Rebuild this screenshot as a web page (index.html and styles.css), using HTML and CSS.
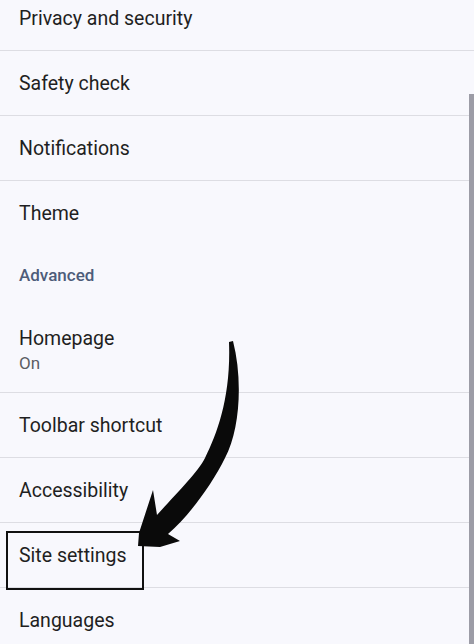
FILE: index.html
```html
<!DOCTYPE html>
<html lang="en">
<head>
<meta charset="utf-8">
<title>Settings</title>
<link rel="stylesheet" href="styles.css">
</head>
<body>
<div class="screen">
  <ul class="list">
    <li class="row">Privacy and security</li>
    <li class="row">Safety check</li>
    <li class="row">Notifications</li>
    <li class="row no-divider">Theme</li>
    <li class="category">Advanced</li>
    <li class="row two-line">
      <span class="title">Homepage</span>
      <span class="summary">On</span>
    </li>
    <li class="row">Toolbar shortcut</li>
    <li class="row">Accessibility</li>
    <li class="row">Site settings</li>
    <li class="row">Languages</li>
  </ul>
  <div class="scrollbar"></div>
  <div class="highlight"></div>
  <svg class="arrow" width="474" height="644" viewBox="0 0 474 644" aria-hidden="true">
    <path d="M229 342 L233 341 C243 380 240 430 225 458 C212 484 190 515 168 534 L180 541 L160 547 L138 546 L139 533 L153 490 L157 515 C175 495 198 472 205 458 C218 432 231 395 229 342 Z" fill="#0a0a0a"/>
  </svg>
</div>
</body>
</html>
```

FILE: styles.css
```css
html, body {
  margin: 0;
  padding: 0;
  background: #f8f8fd;
}
.screen {
  position: relative;
  width: 474px;
  height: 644px;
  overflow: hidden;
  font-family: Roboto, "Noto Sans", sans-serif;
  color: #1f1f22;
}
.list {
  list-style: none;
  margin: -14px 0 0 0;
  padding: 0;
}
.row {
  box-sizing: border-box;
  height: 65px;
  display: flex;
  flex-direction: column;
  justify-content: center;
  padding: 0 19px;
  font-size: 19.5px;
  border-bottom: 1px solid #dddde3;
}
.row.no-divider {
  border-bottom: none;
  height: 64px;
}
.row.two-line {
  height: auto;
  justify-content: flex-start;
  padding-top: 20px;
  padding-bottom: 19px;
}
.title {
  line-height: 24px;
}
.summary {
  margin-top: 2px;
  line-height: 20px;
  font-size: 17px;
  color: #5b5d63;
}
.category {
  padding: 20px 19px 22px;
  line-height: 20px;
  font-size: 17px;
  font-weight: 500;
  color: #4d5c7a;
}
.scrollbar {
  position: absolute;
  right: 0;
  top: 94px;
  bottom: 0;
  width: 5px;
  background: #9c9ca6;
}
.highlight {
  position: absolute;
  left: 6px;
  top: 531px;
  width: 134px;
  height: 55px;
  border: 2px solid #111;
}
.arrow {
  position: absolute;
  left: 0;
  top: 0;
}
```
